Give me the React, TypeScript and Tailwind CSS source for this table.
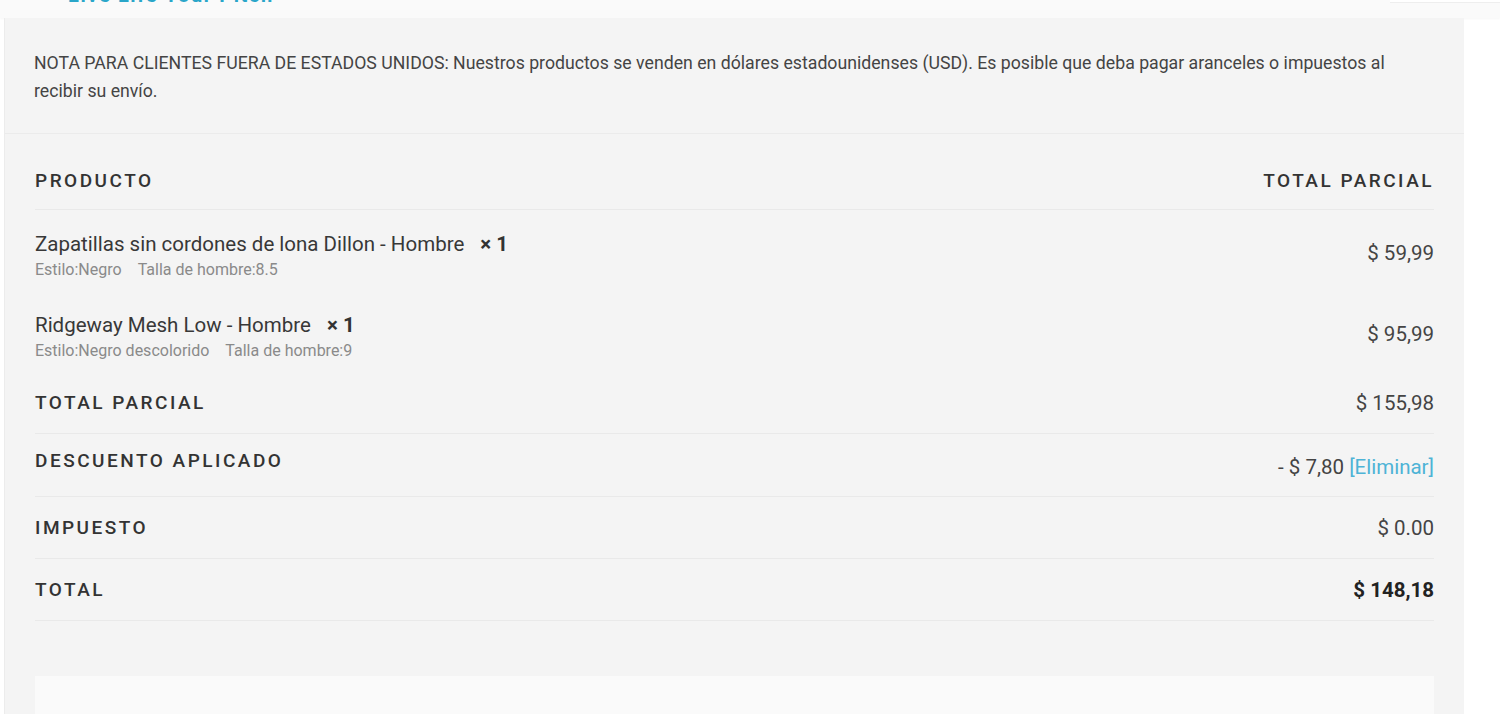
import React from 'react';

type Item = { name: string; qty: number; meta: [string, string]; price: string };

const items: Item[] = [
  { name: 'Zapatillas sin cordones de lona Dillon - Hombre', qty: 1, meta: ['Estilo:Negro', 'Talla de hombre:8.5'], price: '$ 59,99' },
  { name: 'Ridgeway Mesh Low - Hombre', qty: 1, meta: ['Estilo:Negro descolorido', 'Talla de hombre:9'], price: '$ 95,99' },
];

const font = { fontFamily: 'Roboto, "Noto Sans", Arial, sans-serif' };

const label = 'text-[19px] font-medium tracking-[2.5px] leading-[24px] text-[#333]';
const value = 'text-[20.5px] leading-[24px] text-[#444]';

export default function App() {
  return (
    <div className="w-[1500px] h-[714px] overflow-hidden bg-white" style={font}>
      {/* top bar, mostly scrolled away */}
      <div className="h-[18px] bg-[#fafafa] flex items-end justify-between overflow-hidden shadow-[0_1px_2px_rgba(0,0,0,0.04)]">
        <span className="ml-[68px] mb-[13px] text-[20px] font-bold tracking-[0.08em] leading-none text-[#2aa6c9]">Live Life Your Pitch</span>
        <div className="self-start w-[110px] h-[3px] bg-white border-b border-[#eee]" />
      </div>

      <div className="ml-[4px] w-[1460px] h-[696px] bg-[#f4f4f4] border-l border-[#ececec]">
        <div className="px-[29px] pt-[31px] pb-[28px] border-b border-[#ebebeb]">
          <p className="text-[17.7px] leading-[28px] text-[#444] max-w-[1380px]">
            NOTA PARA CLIENTES FUERA DE ESTADOS UNIDOS: Nuestros productos se venden en dólares estadounidenses (USD). Es posible que deba pagar aranceles o impuestos al recibir su envío.
          </p>
        </div>

        <div className="mx-[30px] mt-[18px]">
          <div className="flex items-center justify-between h-[58px] border-b border-[#e9e9e9]">
            <span className={label}>PRODUCTO</span>
            <span className={label}>TOTAL PARCIAL</span>
          </div>

          {items.map((it, i) => (
            <div key={i} className="flex items-start justify-between h-[81px] pt-[22px]">
              <div className="flex flex-col">
                <div className="flex items-baseline text-[20.5px] text-[#383838] leading-[24px]">
                  <span>{it.name}</span>
                  <span className="ml-[16px] font-bold text-[#333]">× {it.qty}</span>
                </div>
                <div className="flex gap-[16px] text-[16px] text-[#8a8a8a] leading-[20px] mt-[4px]">
                  <span>{it.meta[0]}</span>
                  <span>{it.meta[1]}</span>
                </div>
              </div>
              <span className={`${value} mt-[9px]`}>{it.price}</span>
            </div>
          ))}

          <div className="flex items-center justify-between h-[62px] border-b border-[#e9e9e9]">
            <span className={label}>TOTAL PARCIAL</span>
            <span className={value}>$ 155,98</span>
          </div>
          <div className="flex items-start justify-between h-[63px] border-b border-[#e9e9e9] pt-[15px]">
            <span className={label}>DESCUENTO APLICADO</span>
            <span className={`${value} mt-[6px]`}>
              - $ 7,80 <a className="text-[#4db3d6]">[Eliminar]</a>
            </span>
          </div>
          <div className="flex items-center justify-between h-[62px] border-b border-[#e9e9e9] pt-[1px]">
            <span className={label}>IMPUESTO</span>
            <span className={value}>$ 0.00</span>
          </div>
          <div className="flex items-center justify-between h-[62px] border-b border-[#e9e9e9] pt-[1px]">
            <span className={label}>TOTAL</span>
            <span className="text-[20.5px] leading-[24px] font-bold text-[#222]">$ 148,18</span>
          </div>

          <div className="mt-[55px] h-[60px] bg-[#fafafa]" />
        </div>
      </div>
    </div>
  );
}
